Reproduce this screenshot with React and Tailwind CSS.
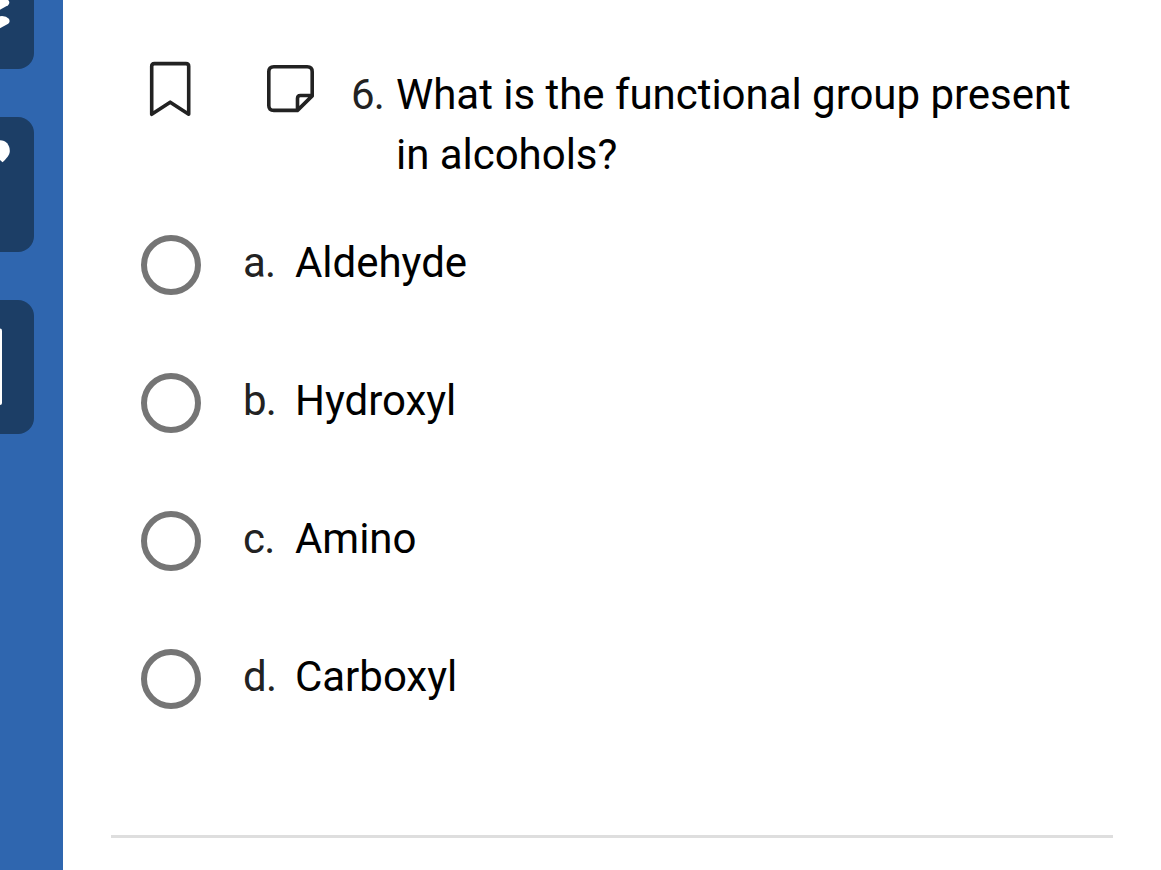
const options = [
  { letter: 'a.', text: 'Aldehyde' },
  { letter: 'b.', text: 'Hydroxyl' },
  { letter: 'c.', text: 'Amino' },
  { letter: 'd.', text: 'Carboxyl' },
]

function Sidebar() {
  return (
    <aside className="w-[63px] shrink-0 bg-[#2f66af] flex flex-col gap-12">
      <button className="block w-[34px] h-[69px] bg-[#1c3e66] rounded-br-[16px]">
        <svg className="block" width="34" height="69" viewBox="0 0 34 69" fill="#fff">
          <path d="M0 0H8.2Q10.6 2.6 8 5.2L0 9.8Z" />
          <path d="M0 16.2Q6 15.5 8.8 18.7Q10.6 21.5 8.2 23.8L0 28.2Z" />
        </svg>
      </button>
      <button className="block w-[34px] h-[135px] bg-[#1c3e66] rounded-r-[16px]">
        <svg className="block" width="34" height="135" viewBox="0 0 34 135" fill="#fff">
          <path d="M0 23.3C6 23.3 9.8 28 9.8 34C9.8 38 6.5 41.5 2.5 45.3L0 43Z" />
        </svg>
      </button>
      <button className="block w-[34px] h-[134px] bg-[#1c3e66] rounded-r-[16px]">
        <svg className="block" width="34" height="134" viewBox="0 0 34 134" fill="#fff">
          <path d="M0 28.5Q2 28.5 2 30.5V103Q2 105 0 105Z" />
        </svg>
      </button>
    </aside>
  )
}

function BookmarkIcon() {
  return (
    <svg
      className="block shrink-0"
      width="42"
      height="56"
      viewBox="0 0 42 56"
      fill="none"
      stroke="#222"
      strokeWidth="3.6"
      strokeLinecap="round"
      strokeLinejoin="round"
    >
      <path d="M2.7 53.3V5.3Q2.7 2.6 5.4 2.6H37Q39.7 2.6 39.7 5.3V53.3L21.2 41.2Z" />
    </svg>
  )
}

function NoteIcon() {
  return (
    <svg
      className="block shrink-0"
      width="50"
      height="50"
      viewBox="0 0 50 50"
      fill="none"
      stroke="#222"
      strokeWidth="3.6"
      strokeLinecap="round"
      strokeLinejoin="round"
    >
      <path d="M31.5 46.4H7.8Q2.8 46.4 2.8 41.4V7.8Q2.8 2.8 7.8 2.8H41.2Q46.2 2.8 46.2 7.8V31.9L31.5 46.4V34.4Q31.5 31.5 34.4 31.5H46" />
    </svg>
  )
}

function App() {
  return (
    <div className="flex h-[870px] w-[1161px] overflow-hidden bg-white font-[Roboto,sans-serif] text-[42px] leading-[60px] tracking-[-0.03px]">
      <Sidebar />

      <main className="flex-1 px-12 pt-[61px]">
        {/* Question */}
        <div className="flex items-start pl-[38px]">
          <BookmarkIcon />
          <div className="ml-[75px] mt-[3px]">
            <NoteIcon />
          </div>
          <span className="ml-[35px] mt-1 w-[45px] shrink-0 tracking-[-0.8px] text-[#222]">6.</span>
          <h1 className="mt-1 w-[700px] font-normal text-black">
            What is the functional group present in alcohols?
          </h1>
        </div>

        {/* Answers */}
        <ul className="mt-[50px] flex flex-col gap-[78px] pl-[30px]">
          {options.map((option) => (
            <li key={option.letter} className="flex h-[60px] items-center">
              <span className="size-[60px] shrink-0 rounded-full border-[6px] border-[#757575]"></span>
              <span className="-mt-1 ml-[42px] w-[52px] tracking-[-0.8px] text-[#222]">{option.letter}</span>
              <span className="-mt-1 text-black">{option.text}</span>
            </li>
          ))}
        </ul>

        <hr className="mt-[126px] border-t-[3px] border-[#dedede]" />
      </main>
    </div>
  )
}

export default App
